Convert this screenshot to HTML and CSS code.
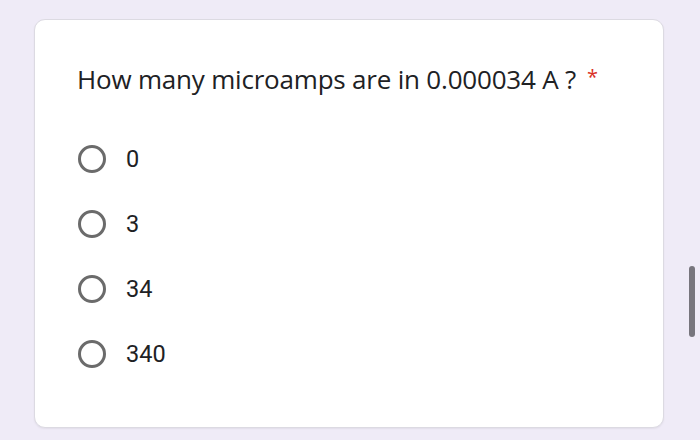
FILE: index.html
```html
<!DOCTYPE html>
<html>
<head>
<meta charset="utf-8">
<link rel="stylesheet" href="styles.css">
</head>
<body>
<div class="page">
  <div class="card">
    <div class="question">How many microamps are in 0.000034 A ?<span class="req">*</span></div>
    <div class="options">
      <label class="option"><span class="radio"></span><span class="label">0</span></label>
      <label class="option"><span class="radio"></span><span class="label">3</span></label>
      <label class="option"><span class="radio"></span><span class="label">34</span></label>
      <label class="option"><span class="radio"></span><span class="label">340</span></label>
    </div>
  </div>
</div>
<div class="scrollbar"></div>
</body>
</html>
```
FILE: styles.css
```css
html, body {
  margin: 0;
  padding: 0;
  background: #efebf7;
  height: 100%;
}
.page {
  padding: 19px 0 0 34px;
}
.card {
  box-sizing: border-box;
  width: 630px;
  height: 409px;
  background: #ffffff;
  border: 1px solid #dcdae2;
  border-radius: 11px;
  padding: 39px 0 0 42px;
  box-shadow: 0 1px 2px rgba(0,0,0,0.06);
}
.question {
  font-family: "Open Sans", "Noto Sans", sans-serif;
  font-size: 26px;
  color: #202124;
  letter-spacing: -0.2px;
  line-height: 36px;
}
.req {
  color: #d93025;
  margin-left: 11px;
  font-size: 20px;
  vertical-align: 5px;
}
.options {
  display: flex;
  flex-direction: column;
  gap: 37px;
  margin-top: 48px;
}
.option {
  display: flex;
  align-items: center;
  gap: 20px;
  height: 28px;
}
.radio {
  box-sizing: border-box;
  width: 28px;
  height: 28px;
  border: 3px solid #6b6b6b;
  border-radius: 50%;
  margin-left: 1px;
}
.label {
  font-family: Roboto, "Liberation Sans", sans-serif;
  font-size: 23.5px;
  color: #202124;
}
.scrollbar {
  position: absolute;
  left: 689px;
  top: 266px;
  width: 6px;
  height: 71px;
  border-radius: 3px;
  background: #77757d;
}
```
